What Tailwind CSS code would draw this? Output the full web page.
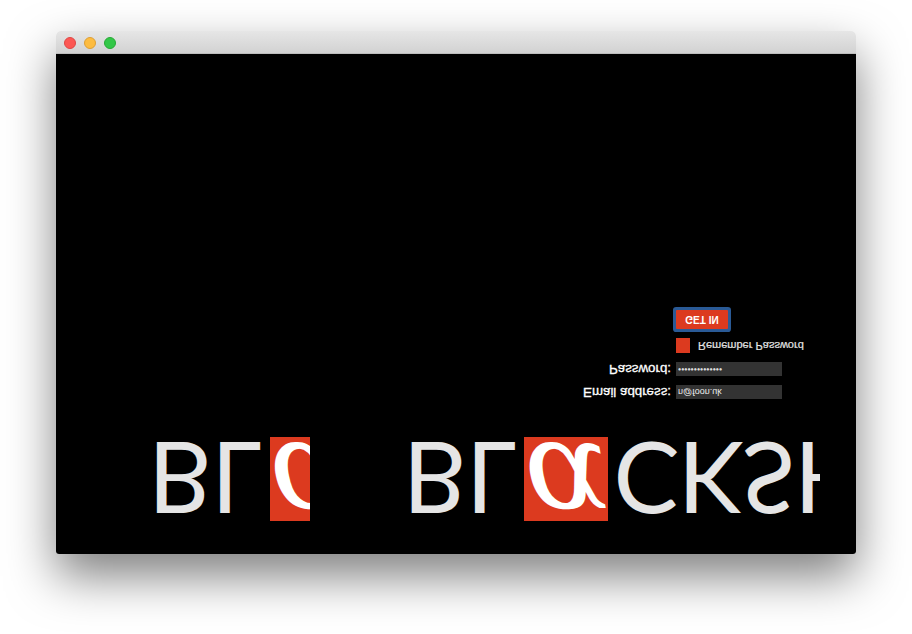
<!DOCTYPE html>
<html lang="en">
<head>
    <meta charset="UTF-8">
    <title>Blackshield</title>
    <script src="https://cdn.jsdelivr.net/npm/@tailwindcss/browser@4"></script>
</head>
<body class="bg-white h-[634px] w-[912px] overflow-hidden font-['Liberation_Sans',Arial,sans-serif]">
    <div class="ml-[56px] pt-[31px] w-[800px]">
        <div class="w-[800px] rounded-t-[5px] rounded-b-[3px] overflow-hidden shadow-[0_22px_48px_0_rgba(0,0,0,0.5)]">
            <!-- title bar -->
            <div class="h-[23px] flex items-center gap-2 pl-2 pt-px bg-gradient-to-b from-[#e6e6e6] to-[#d2d2d2] border-b border-[#bdbdbd]">
                <span class="w-3 h-3 rounded-full bg-[#fc5753] border border-[#df4744]"></span>
                <span class="w-3 h-3 rounded-full bg-[#fdbc40] border border-[#de9f34]"></span>
                <span class="w-3 h-3 rounded-full bg-[#33c748] border border-[#27aa35]"></span>
            </div>

            <!-- page is mirrored top to bottom -->
            <div class="h-[500px] bg-black overflow-hidden -scale-y-100 pt-[33px]">
                <div class="flex h-[84px] w-[764px] overflow-hidden text-[#e5e5e5] text-[98px] leading-[82px] font-['Lato',sans-serif] pl-[92px] whitespace-nowrap">
                    <span>BL</span>
                    <span class="block w-[40px] h-[84px] shrink-0 ml-[8px] overflow-hidden bg-[#dc3a1f] text-white">
                        <span class="block w-[84px] pr-[7px] text-center font-['DejaVu_Serif',serif] italic text-[124px] leading-[68px]">α</span>
                    </span>
                    <span class="ml-[93px]">BL</span>
                    <span class="block w-[84px] h-[84px] shrink-0 ml-[8px] overflow-hidden bg-[#dc3a1f] text-white pr-[7px] text-center font-['DejaVu_Serif',serif] italic text-[124px] leading-[68px]">α</span>
                    <span class="ml-[5px] tracking-[-1px]">CKSHIELD</span>
                </div>

                <form class="mt-[38px] grid grid-cols-[615px_1fr] gap-x-[5px] text-white text-[13.3px] [-webkit-text-stroke:0.3px_white]">
                    <label class="text-right leading-[14px]">Email address:</label>
                    <input type="text" value="n@foon.uk" class="w-[106px] h-[14px] bg-[#333] text-[9px] text-[#eee] px-[2px] outline-none [-webkit-text-stroke:0]">

                    <label class="text-right leading-[14px] mt-[9px]">Password:</label>
                    <input type="password" value="passwordpasswo" class="w-[106px] h-[14px] mt-[9px] bg-[#333] text-[9px] text-[#ddd] px-[2px] outline-none [-webkit-text-stroke:0]">

                    <div class="col-start-2 flex items-center gap-2 mt-[9px] h-[15px] whitespace-nowrap text-[11px] text-[#e5e5e5] [-webkit-text-stroke:0.2px_#e5e5e5]">
                        <span class="w-[14px] h-[15px] bg-[#dc3a1f]"></span>
                        <span>Remember Password</span>
                    </div>

                    <div class="col-start-2 mt-[9px]">
                        <button type="button" class="block w-[52px] h-[19px] bg-[#dc3a1f] text-white text-[10px] font-bold ring-[3px] ring-[#2a5a96] rounded-[1px] [-webkit-text-stroke:0]">GET IN</button>
                    </div>
                </form>
            </div>
        </div>
    </div>
</body>
</html>
